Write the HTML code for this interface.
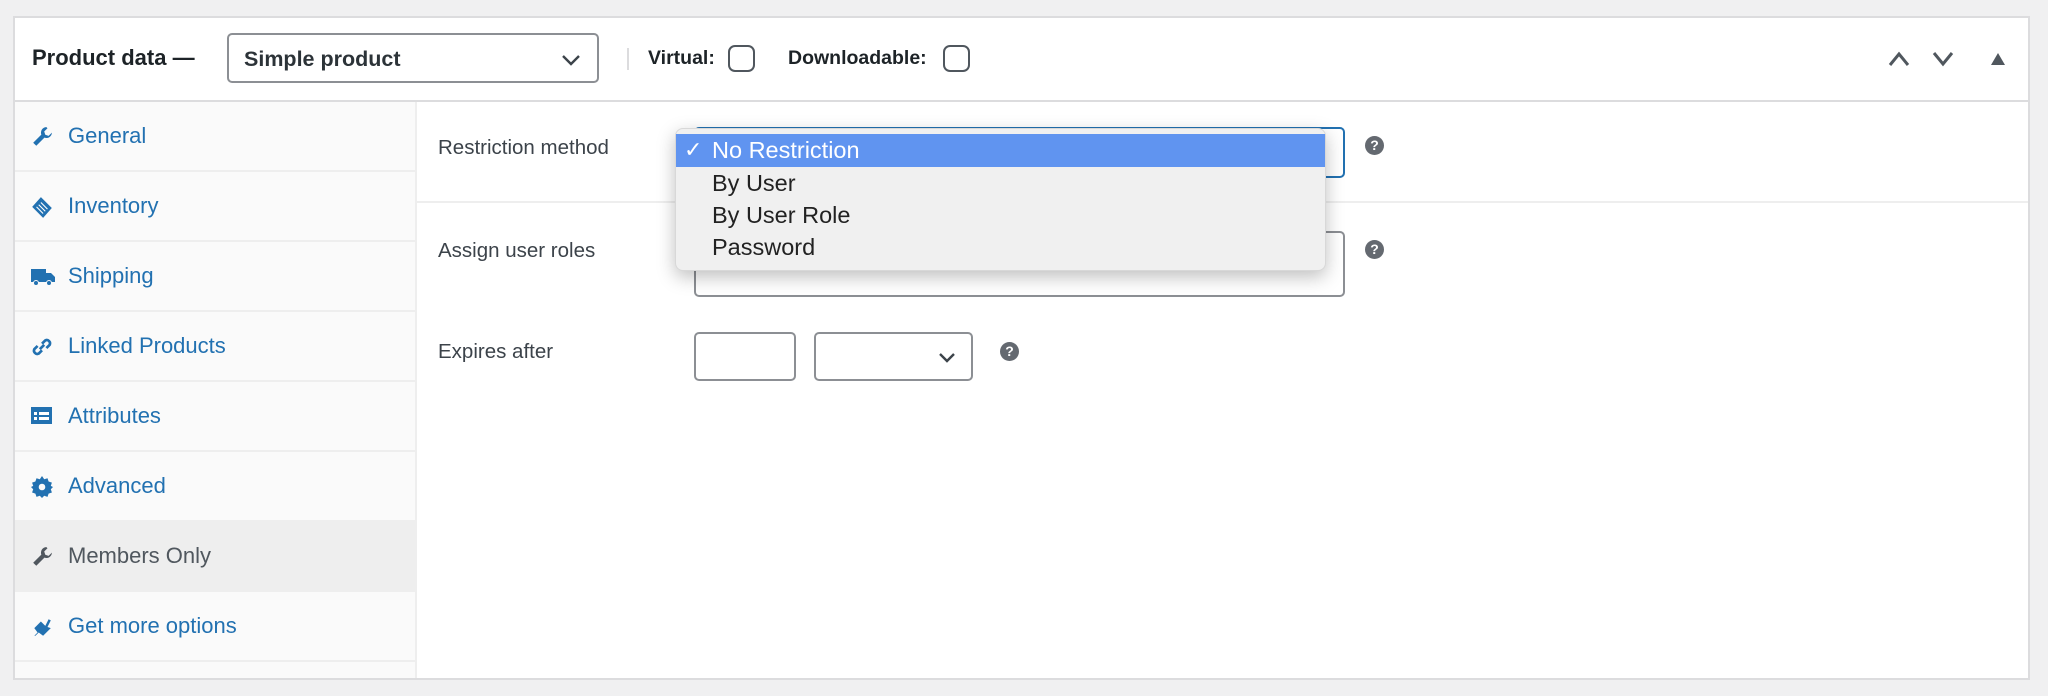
<!DOCTYPE html>
<html><head><meta charset="utf-8">
<style>
*{box-sizing:border-box;margin:0;padding:0}
body{width:2048px;height:696px;background:#f0f0f1;font-family:"Liberation Sans",Arial,sans-serif;position:relative;overflow:hidden}
.panel{position:absolute;left:13px;top:16px;width:2017px;height:664px;background:#fff;border:2px solid #dcdcde}
.abs{position:absolute}
.hdr{position:absolute;left:0;top:0;right:0;height:84px;border-bottom:2px solid #dcdcde}
.side{position:absolute;left:0;top:84px;width:402px;bottom:0;background:#fafafa;border-right:2px solid #eee}
.item{position:absolute;left:0;width:400px;height:70px;border-bottom:2px solid #eee;color:#2271b1;font-size:22px;line-height:68px;padding-left:53px}
.item svg{position:absolute;left:16px;top:24px}
.lbl{position:absolute;color:#3c434a;font-size:20.5px}
.box{position:absolute;border:2px solid #8c8f94;border-radius:5px;background:#fff}
.help{position:absolute;width:19px;height:19px;border-radius:50%;background:#646970;color:#fff;font-size:14px;font-weight:bold;text-align:center;line-height:19px}
.dd{position:absolute;left:675px;top:128px;width:651px;height:143px;background:#f0f0f0;border-radius:8px;box-shadow:0 6px 18px rgba(0,0,0,.25);border:1px solid #d8d8d8}
.opt{position:absolute;left:36px;font-size:23.5px;color:#222}
</style></head><body>
<div class="panel">
 <div class="hdr">
  <div class="abs" style="left:17px;top:27px;font-size:22px;font-weight:bold;color:#1d2327">Product data —</div>
  <div class="box" style="left:212px;top:15px;width:372px;height:50px;border-color:#8c8f94">
   <div class="abs" style="left:15px;top:12px;font-size:21.5px;font-weight:bold;color:#2c3338">Simple product</div>
   <svg class="abs" style="left:332px;top:18px" width="20" height="14"><path d="M2 3l8 8 8-8" fill="none" stroke="#3c434a" stroke-width="2.4"/></svg>
  </div>
  <div class="abs" style="left:612px;top:30px;width:2px;height:22px;background:#dcdcde"></div>
  <div class="abs" style="left:633px;top:29px;font-size:19.5px;font-weight:bold;color:#1d2327">Virtual:</div>
  <div class="box" style="left:713px;top:27px;width:27px;height:27px;border-radius:7px;border-color:#50575e"></div>
  <div class="abs" style="left:773px;top:29px;font-size:19.5px;font-weight:bold;color:#1d2327">Downloadable:</div>
  <div class="box" style="left:928px;top:27px;width:27px;height:27px;border-radius:7px;border-color:#50575e"></div>
  <svg class="abs" style="left:1872px;top:32px" width="24" height="18"><path d="M3 15l9-11 9 11" fill="none" stroke="#50575e" stroke-width="3"/></svg>
  <svg class="abs" style="left:1916px;top:32px" width="24" height="18"><path d="M3 3l9 11 9-11" fill="none" stroke="#50575e" stroke-width="3"/></svg>
  <svg class="abs" style="left:1975px;top:34px" width="16" height="14"><path d="M8 1l7 12H1z" fill="#50575e"/></svg>
 </div>
 <div class="side">
  <div class="item" style="top:0"><svg width="22" height="22" viewBox="0 0 20 20"><path d="M14 1a5 5 0 0 0-4.6 6.8L2 15.2 4.8 18l7.4-7.4A5 5 0 0 0 19 6l-3 3-3-1-1-3 3-3z" fill="#2271b1"/></svg>General</div>
  <div class="item" style="top:70px"><svg width="22" height="24" viewBox="0 0 20 22"><path d="M9 1l10 10-8 9L1 10zM12 3l3 3" fill="#2271b1"/><path d="M7 8l6 6M5 10l6 6M9 6l6 6" stroke="#fff" stroke-width="1"/></svg>Inventory</div>
  <div class="item" style="top:140px"><svg width="24" height="22" viewBox="0 0 24 22"><path d="M0 3h15v13H0zM15 7h5l4 4v5h-9z" fill="#2271b1"/><circle cx="5" cy="17" r="2.5" fill="#2271b1" stroke="#fafafa"/><circle cx="18" cy="17" r="2.5" fill="#2271b1" stroke="#fafafa"/></svg>Shipping</div>
  <div class="item" style="top:210px"><svg width="22" height="22" viewBox="0 0 20 20"><path d="M8 12l4-4M6 9l-3 3a3 3 0 0 0 4 4l3-3M14 11l3-3a3 3 0 0 0-4-4l-3 3" fill="none" stroke="#2271b1" stroke-width="2.4"/></svg>Linked Products</div>
  <div class="item" style="top:280px"><svg width="22" height="20" viewBox="0 0 22 20"><rect x="0" y="1" width="21" height="17" fill="#2271b1"/><rect x="3" y="6" width="3" height="3" fill="#fff"/><rect x="8" y="6" width="10" height="3" fill="#fff"/><rect x="3" y="11" width="3" height="3" fill="#fff"/><rect x="8" y="11" width="10" height="3" fill="#fff"/></svg>Attributes</div>
  <div class="item" style="top:350px"><svg width="22" height="22" viewBox="0 0 20 20"><path d="M10 0l2 3 3-1 1 3 3 1-1 3 2 1-2 2 1 3-3 1-1 3-3-1-2 2-2-2-3 1-1-3-3-1 1-3-2-2 2-1-1-3 3-1 1-3 3 1z" fill="#2271b1"/><circle cx="10" cy="10" r="3" fill="#fafafa"/></svg>Advanced</div>
  <div class="item" style="top:420px;background:#eee;color:#50575e"><svg width="22" height="22" viewBox="0 0 20 20"><path d="M14 1a5 5 0 0 0-4.6 6.8L2 15.2 4.8 18l7.4-7.4A5 5 0 0 0 19 6l-3 3-3-1-1-3 3-3z" fill="#50575e"/></svg>Members Only</div>
  <div class="item" style="top:490px"><svg width="22" height="22" viewBox="0 0 20 20"><path d="M3 18l3-3-3-4 6-6 4 4 3-6 2 1-3 6 3 1-7 7-4-3-3 3z" fill="#2271b1"/></svg>Get more options</div>
 </div>
 <div class="abs" style="left:402px;top:183px;right:0;height:2px;background:#eee"></div>
 <div class="lbl" style="left:423px;top:118px">Restriction method</div>
 <div class="box" style="left:679px;top:109px;width:651px;height:51px;border-color:#2271b1;border-width:2px"></div>
 <div class="help" style="left:1350px;top:118px">?</div>
 <div class="lbl" style="left:423px;top:221px">Assign user roles</div>
 <div class="box" style="left:679px;top:213px;width:651px;height:66px"></div>
 <div class="help" style="left:1350px;top:222px">?</div>
 <div class="lbl" style="left:423px;top:322px">Expires after</div>
 <div class="box" style="left:679px;top:314px;width:102px;height:49px"></div>
 <div class="box" style="left:799px;top:314px;width:159px;height:49px">
  <svg class="abs" style="left:122px;top:18px" width="18" height="12"><path d="M2 2l7 7 7-7" fill="none" stroke="#3c434a" stroke-width="2.4"/></svg>
 </div>
 <div class="help" style="left:985px;top:324px">?</div>
</div>
<div class="dd">
 <div class="abs" style="left:0;top:5px;width:649px;height:33px;background:#6094f0"></div>
 <div class="abs" style="left:8px;top:8px;font-size:22px;color:#fff">✓</div>
 <div class="opt" style="top:8px;color:#fff">No Restriction</div>
 <div class="opt" style="top:41px">By User</div>
 <div class="opt" style="top:73px">By User Role</div>
 <div class="opt" style="top:105px">Password</div>
</div>
</body></html>
